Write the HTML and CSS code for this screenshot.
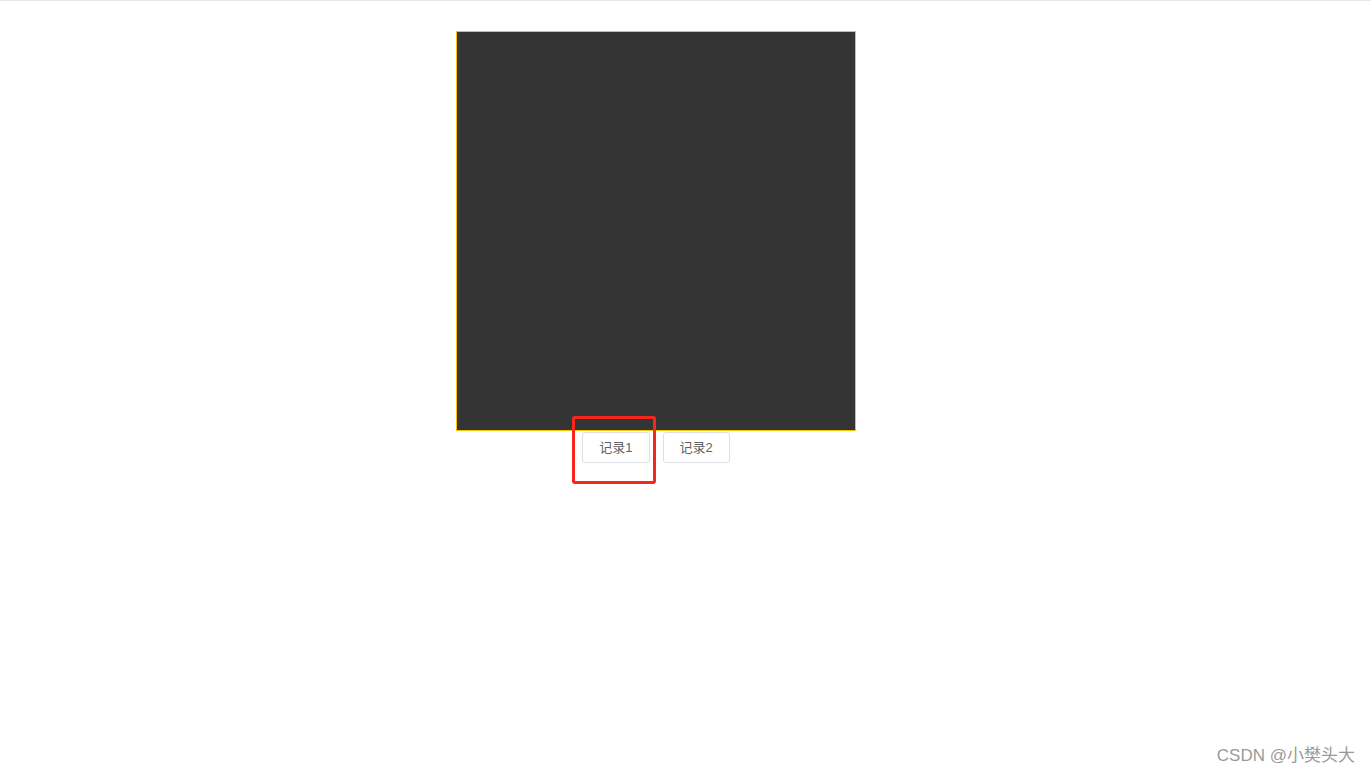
FILE: index.html
```html
<!DOCTYPE html>
<html lang="zh">
<head>
<meta charset="utf-8">
<title>记录</title>
<link rel="stylesheet" href="styles.css">
</head>
<body>
<div class="topline"></div>
<main class="stage">
  <div class="canvas-box"></div>
  <div class="btn-row">
    <button class="btn">记录1</button>
    <button class="btn">记录2</button>
  </div>
</main>
<div class="highlight"></div>
<div class="watermark">CSDN @小樊头大</div>
</body>
</html>
```
FILE: styles.css
```css
html, body {
  margin: 0;
  padding: 0;
  background: #ffffff;
  font-family: "Liberation Sans", "Noto Sans CJK SC", sans-serif;
}
body {
  position: relative;
  width: 1371px;
  height: 772px;
  overflow: hidden;
}
.topline {
  height: 1px;
  background: #e6e6e6;
}
.stage {
  margin-left: 456px;
  padding-top: 30px;
  width: 400px;
}
.canvas-box {
  width: 398px;
  height: 398px;
  border: 1px solid #f5c400;
  background: #343434;
}
.btn-row {
  display: flex;
  justify-content: center;
  gap: 13px;
  margin-top: 1px;
}
.btn {
  height: 31px;
  padding: 0 16px;
  box-sizing: border-box;
  border: 1px solid #dcdfe6;
  border-radius: 3px;
  background: #fff;
  color: #606266;
  font-size: 13px;
  font-family: "Liberation Sans", "Noto Sans CJK SC", sans-serif;
  line-height: 29px;
  cursor: pointer;
}
.highlight {
  position: absolute;
  left: 572px;
  top: 416px;
  width: 78px;
  height: 62px;
  border: 3px solid #f5261b;
  border-radius: 3px;
}
.watermark {
  position: absolute;
  right: 16px;
  top: 741px;
  font-size: 17px;
  color: #9a9a9a;
  font-family: "Liberation Sans", "Noto Sans CJK SC", sans-serif;
}
```
